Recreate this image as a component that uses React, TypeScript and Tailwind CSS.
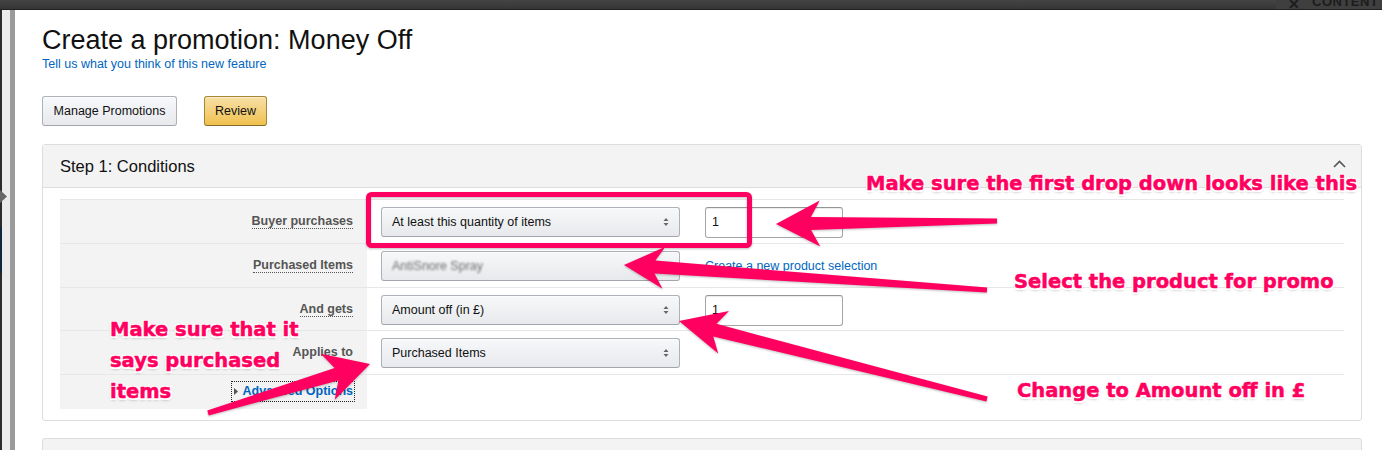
import type { ReactNode } from "react";

type Pt = [number, number];

// tapered skitch-style arrow, wings a bit swept back
function arrowPoints(tail: Pt, tip: Pt, headLen: number, headHalf: number, wTail = 5, wHead = 13) {
  const dx = tip[0] - tail[0];
  const dy = tip[1] - tail[1];
  const len = Math.hypot(dx, dy);
  const ux = dx / len;
  const uy = dy / len;
  const nx = -uy;
  const ny = ux;
  const jx = tip[0] - ux * (headLen - 9);
  const jy = tip[1] - uy * (headLen - 9);
  const wx = tip[0] - ux * headLen;
  const wy = tip[1] - uy * headLen;
  const pts: Pt[] = [
    [tail[0] + (nx * wTail) / 2, tail[1] + (ny * wTail) / 2],
    [jx + (nx * wHead) / 2, jy + (ny * wHead) / 2],
    [wx + nx * headHalf, wy + ny * headHalf],
    tip,
    [wx - nx * headHalf, wy - ny * headHalf],
    [jx - (nx * wHead) / 2, jy - (ny * wHead) / 2],
    [tail[0] - (nx * wTail) / 2, tail[1] - (ny * wTail) / 2],
  ];
  return pts.map((p) => `${p[0].toFixed(1)},${p[1].toFixed(1)}`).join(" ");
}

const arrows: { tail: Pt; tip: Pt; len: number; half: number }[] = [
  { tail: [997, 221], tip: [776, 224], len: 44, half: 23 },
  { tail: [987, 290], tip: [624, 265], len: 40, half: 21 },
  { tail: [987, 399], tip: [679, 321], len: 46, half: 22 },
  { tail: [208, 413], tip: [370, 364], len: 44, half: 24 },
];

function SelectBox({ children }: { children: ReactNode }) {
  return (
    <div className="relative flex h-[30px] w-[299px] items-center rounded-[3px] border border-[#adb1b8] border-b-[#a2a6ac] bg-linear-to-b from-[#f7f8fa] to-[#e7e9ec] pl-[10px] text-[12.5px] text-[#111] shadow-[inset_0_1px_0_rgba(255,255,255,0.6)]">
      {children}
      <svg
        className="absolute right-[10px] top-1/2 -translate-y-1/2"
        width="6"
        height="9"
        viewBox="0 0 6 9"
      >
        <path d="M3 0.5L5.5 3.5H0.5Z M3 8.5L0.5 5.5H5.5Z" fill="#666" />
      </svg>
    </div>
  );
}

function NumberBox({ value }: { value: string }) {
  return (
    <div className="flex h-[31px] w-[138px] items-center rounded-[3px] border border-[#a6a6a6] border-t-[#949494] bg-white pl-[6px] text-[12.5px] text-[#111] shadow-[0_1px_0_rgba(255,255,255,0.5),inset_0_1px_0_rgba(0,0,0,0.07)]">
      {value}
    </div>
  );
}

function Label({ children, dotted = true }: { children: ReactNode; dotted?: boolean }) {
  return (
    <span
      className={
        dotted
          ? "inline-block border-b border-dotted border-[#555] text-[12.5px] font-bold leading-[14px] text-[#555]"
          : "inline-block text-[12.5px] font-bold leading-[14px] text-[#555]"
      }
    >
      {children}
    </span>
  );
}

function Row({
  label,
  children,
  height,
}: {
  label: ReactNode;
  children?: ReactNode;
  height: string;
}) {
  return (
    <div className={`grid grid-cols-[307px_1fr] border-b border-[#e7e7e7] ${height}`}>
      <div className="bg-[#f3f3f3] pr-[14px] pt-[8px] text-right">{label}</div>
      <div className="flex items-start gap-[25px] pl-[14px] pt-[7px]">{children}</div>
    </div>
  );
}

function TopBar() {
  return (
    <div className="flex h-[10px] overflow-hidden border-b border-[#222] bg-linear-to-b from-[#444] to-[#363636]">
      <div className="flex-1" />
      <div className="flex w-[106px] items-start gap-[12px] bg-[#3f3f3f] pl-[12px]">
        <span className="-mt-[6px] text-[14px] font-bold text-[#1c1c1c]">✕</span>
        <span className="-mt-[8px] text-[13px] font-bold tracking-[0.5px] text-[#1c1c1c]">CONTENT</span>
      </div>
    </div>
  );
}

function LeftEdge() {
  return (
    <div className="flex h-full w-[15px] shrink-0">
      <div className="flex w-[2px] flex-col bg-[#2b2b2b]">
        <div className="h-[217px]" />
        <div className="h-[46px] bg-[#10283a]" />
      </div>
      <div className="w-[8px] bg-[#ebebeb]" />
      <div className="w-[5px] bg-[#9a9a9a]" />
    </div>
  );
}

const noteBase =
  "absolute whitespace-nowrap font-['DejaVu_Sans',sans-serif] text-[19.5px] font-bold text-[#ff0060] [-webkit-text-stroke:0.5px_#ff0060] [text-shadow:-1.5px_-1.5px_0_#fff,1.5px_-1.5px_0_#fff,-1.5px_1.5px_0_#fff,1.5px_1.5px_0_#fff,0_2px_3px_rgba(0,0,0,0.35)]";

function Annotations() {
  return (
    <div className="pointer-events-none absolute inset-0">
      <svg
        className="absolute left-0 top-0 drop-shadow-[0_1px_1px_rgba(0,0,0,0.25)]"
        width="1382"
        height="450"
        viewBox="0 0 1382 450"
      >
        <rect x="368.5" y="194.5" width="381" height="51" rx="3" fill="none" stroke="#ff0060" strokeWidth="5" />
        {arrows.map((a, i) => (
          <polygon key={i} points={arrowPoints(a.tail, a.tip, a.len, a.half)} fill="#ff0060" strokeLinejoin="round" />
        ))}
      </svg>
      {/* left edge triangle */}
      <svg className="absolute left-0 top-[190px]" width="8" height="13" viewBox="0 0 8 13">
        <path d="M0 0L7 6.5L0 13Z" fill="#666" />
      </svg>
      <div className={`${noteBase} left-[866px] top-[173.5px] leading-none`}>
        Make sure the first drop down looks like this
      </div>
      <div className={`${noteBase} left-[1014px] top-[271.5px] leading-none`}>Select the product for promo</div>
      <div className={`${noteBase} left-[1017px] top-[381px] leading-none`}>Change to Amount off in £</div>
      <div className={`${noteBase} left-[110px] top-[313.5px] leading-[31px]`}>
        Make sure that it
        <br />
        says purchased
        <br />
        items
      </div>
    </div>
  );
}

export default function App() {
  return (
    <div className="relative h-[450px] w-[1382px] overflow-hidden bg-white font-['Liberation_Sans',Arial,sans-serif] text-[#111]">
      <TopBar />
      <div className="flex h-[440px]">
        <LeftEdge />
        <main className="flex-1 pl-[27px] pr-[20px]">
          <h1 className="mt-[15px] text-[27px] leading-[31px] text-[#111]">Create a promotion: Money Off</h1>
          <a className="mt-[1px] block text-[12.5px] leading-[15px] text-[#0066c0]">
            Tell us what you think of this new feature
          </a>

          <div className="mt-[24px] flex gap-[27px]">
            <button className="h-[30px] w-[135px] rounded-[3px] border border-[#adb1b8] border-b-[#a2a6ac] bg-linear-to-b from-[#f7f8fa] to-[#e7e9ec] text-[12.5px] text-[#111] shadow-[inset_0_1px_0_rgba(255,255,255,0.6)]">
              Manage Promotions
            </button>
            <button className="h-[30px] w-[63px] rounded-[3px] border border-[#a88734] border-b-[#846a29] bg-linear-to-b from-[#f7dfa5] to-[#f0c14b] text-[12.5px] text-[#111] shadow-[inset_0_1px_0_rgba(255,255,255,0.4)]">
              Review
            </button>
          </div>

          <section className="mt-[18px] rounded-[3px] border border-[#ddd]">
            <div className="flex h-[43px] items-center justify-between border-b border-[#ddd] bg-[#f3f3f3] pl-[17px] pr-[15px]">
              <h2 className="text-[16.5px] text-[#111]">Step 1: Conditions</h2>
              <svg width="13" height="8" viewBox="0 0 13 8" className="-mt-[4px]">
                <path d="M1 7L6.5 1.5L12 7" fill="none" stroke="#555" strokeWidth="1.6" />
              </svg>
            </div>

            <div className="px-[17px] pb-[11px] pt-[11px]">
              <div className="border-t border-[#e7e7e7]">
                <Row height="h-[44px]" label={<Label>Buyer purchases</Label>}>
                  <SelectBox>At least this quantity of items</SelectBox>
                  <NumberBox value="1" />
                </Row>
                <Row height="h-[44px]" label={<Label>Purchased Items</Label>}>
                  <SelectBox>
                    <span className="text-[#6f6f6f] blur-[1px]">AntiSnore Spray</span>
                  </SelectBox>
                  <a className="flex h-[30px] items-center text-[12.5px] text-[#0066c0]">
                    Create a new product selection
                  </a>
                </Row>
                <Row height="h-[43px]" label={<Label>And gets</Label>}>
                  <SelectBox>Amount off (in £)</SelectBox>
                  <NumberBox value="1" />
                </Row>
                <Row height="h-[44px]" label={<Label dotted={false}>Applies to</Label>}>
                  <SelectBox>Purchased Items</SelectBox>
                </Row>
                <div className="grid h-[34px] grid-cols-[307px_1fr]">
                  <div className="flex justify-end bg-[#f3f3f3] pr-[13px] pt-[7px]">
                    <a className="flex h-[19px] items-center gap-[5px] pl-[2px] pr-[1px] text-[12.5px] font-bold text-[#0066c0] outline-1 outline-dotted outline-[#222]">
                      <svg width="4" height="7" viewBox="0 0 4 7">
                        <path d="M0 0L4 3.5L0 7Z" fill="#555" />
                      </svg>
                      Advanced Options
                    </a>
                  </div>
                  <div />
                </div>
              </div>
            </div>
          </section>

          <div className="mt-[17px] h-[40px] rounded-[3px] border border-[#ddd] bg-[#f3f3f3]" />
        </main>
      </div>
      <Annotations />
    </div>
  );
}
